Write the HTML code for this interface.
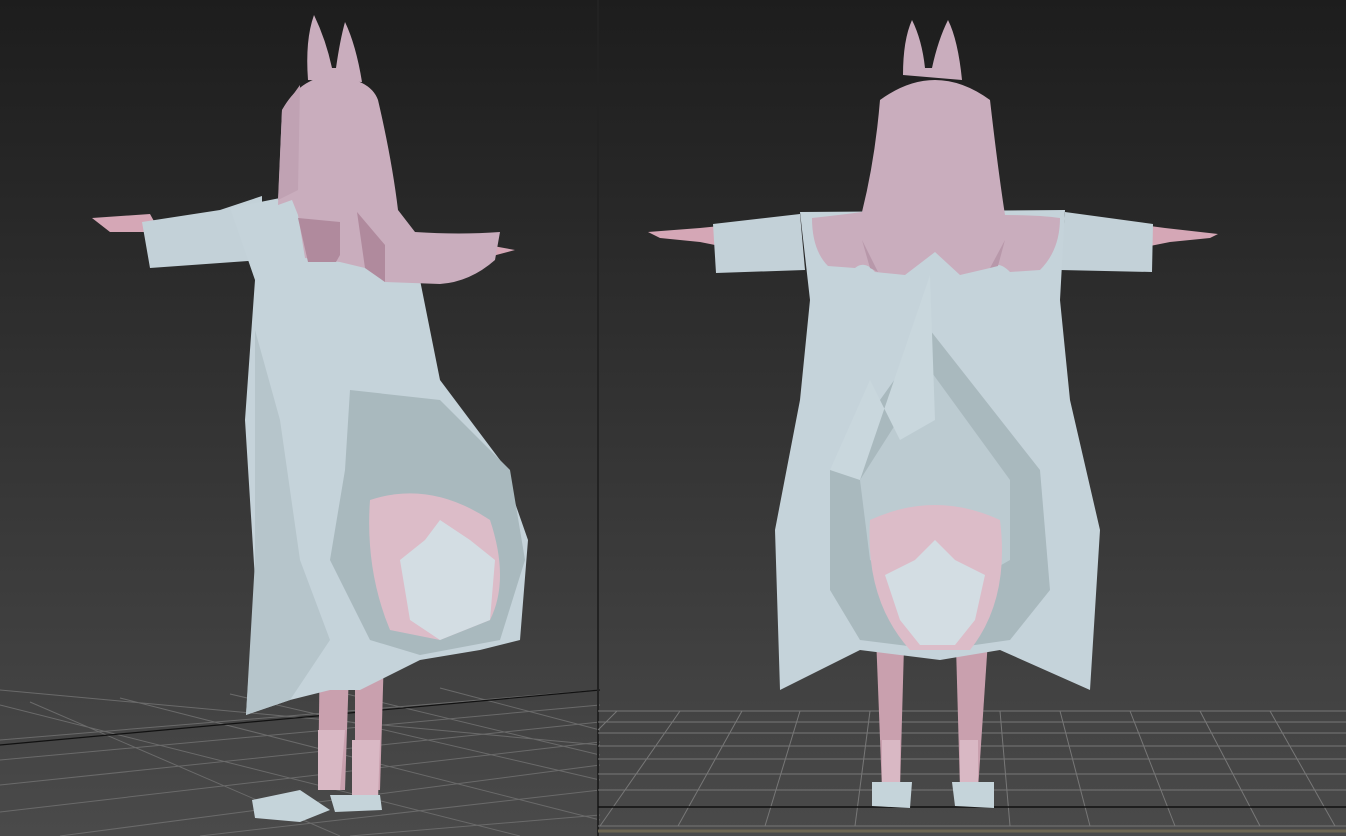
<!DOCTYPE html>
<html><head><style>
html,body{margin:0;padding:0;width:1346px;height:836px;overflow:hidden;background:#2a2a2a}
svg{display:block}
</style></head><body>
<svg width="1346" height="836" viewBox="0 0 1346 836">
<defs>
<linearGradient id="bg" x1="0" y1="0" x2="0" y2="1">
<stop offset="0" stop-color="#1d1d1d"/><stop offset="0.5" stop-color="#333"/><stop offset="1" stop-color="#4a4a4a"/>
</linearGradient>
</defs>
<rect width="1346" height="836" fill="url(#bg)"/>
<!-- left grid -->
<g stroke="#6a6a6a" stroke-width="1" fill="none">
<path d="M0 740 L600 690 M0 760 L600 705 M0 785 L600 722 M0 812 L600 742 M60 836 L600 765 M200 836 L600 790 M350 836 L600 815"/>
<path d="M0 690 L600 745 M0 705 L520 836 M30 702 L340 836 M120 698 L600 820 M230 694 L600 780 M330 690 L600 755 M440 688 L600 730"/>
</g>
<path d="M0 745 L600 690" stroke="#111" stroke-width="1.2"/>
<line x1="598" y1="0" x2="598" y2="836" stroke="#222" stroke-width="2"/>
<!-- right grid -->
<g stroke="#777" stroke-width="1" fill="none">
<path d="M598 711 H1346 M598 722 H1346 M598 733 H1346 M598 746 H1346 M598 759 H1346 M598 774 H1346 M598 790 H1346 M598 826 H1346"/>
<path d="M617 711 L598 730 M680 711 L600 826 M742 711 L678 826 M800 711 L765 826 M870 711 L855 826 M1000 711 L1010 826 M1060 711 L1090 826 M1130 711 L1175 826 M1200 711 L1260 826 M1270 711 L1335 826"/>
</g>
<path d="M598 807 H1346" stroke="#111" stroke-width="1.5"/>
<path d="M598 831 H1346" stroke="#6c6550" stroke-width="3"/>

<!-- RIGHT CHARACTER -->
<g>
<path d="M875 610 L905 610 L900 790 L882 790 Z" fill="#c9a0ae"/>
<path d="M955 610 L990 610 L978 790 L960 790 Z" fill="#c9a0ae"/>
<path d="M882 740 L900 740 L900 790 L882 790Z M960 740 L978 740 L978 790 L960 790Z" fill="#d9b8c4"/>
<path d="M872 782 L912 782 L910 808 L872 806 Z M952 782 L994 782 L994 808 L955 806Z" fill="#c5d4da"/>
<path d="M648 232 L700 228 L720 226 L720 246 L700 242 L660 238 Z" fill="#d5a7b6"/>
<path d="M1218 234 L1165 228 L1150 226 L1150 246 L1170 242 L1210 238Z" fill="#d5a7b6"/>
<path d="M713 224 L800 214 L805 270 L716 273 Z" fill="#c3d1d8"/>
<path d="M1153 224 L1065 212 L1060 270 L1152 272 Z" fill="#c3d1d8"/>
<path d="M800 212 L1065 210 L1060 300 L1070 400 L1100 530 L1090 690 L1000 650 L940 660 L860 650 L780 690 L775 530 L800 400 L810 300 Z" fill="#c5d3da"/>
<path d="M830 470 L930 330 L1040 470 L1050 590 L1010 640 L940 650 L860 640 L830 590 Z" fill="#a9b9be"/>
<path d="M860 480 L930 370 L1010 480 L1010 560 L940 600 L870 560Z" fill="#bccbd1"/>
<path d="M930 275 L935 420 L900 440 L870 380 L830 470 L860 480 Z" fill="#c9d7dd"/>
<path d="M870 520 Q935 490 1000 520 Q1010 600 970 650 L910 650 Q865 600 870 520Z" fill="#dcbcc8"/>
<path d="M885 575 L915 560 L935 540 L955 560 L985 575 L975 620 L955 645 L920 645 L900 620Z" fill="#d3dde3"/>
<!-- hair -->
<path d="M880 100 Q935 60 990 100 Q998 170 1005 215 Q1040 215 1060 218 Q1060 250 1040 270 L1010 272 Q998 260 990 268 L960 275 L935 252 L905 275 L875 272 Q865 260 855 268 L828 266 Q812 250 812 218 Q840 215 862 212 Q875 160 880 100Z" fill="#c9adbd"/>
<path d="M862 240 L870 268 L878 272 Z M1005 240 L998 266 L990 268Z" fill="#b898aa"/>
<!-- ears -->
<path d="M903 75 Q903 40 912 20 Q922 40 925 68 L932 68 Q938 40 948 20 Q958 40 962 80Z" fill="#c9adbd"/>
</g>

<!-- LEFT CHARACTER -->
<g>
<path d="M320 640 L350 640 L345 790 L318 790Z" fill="#c9a0ae"/>
<path d="M355 620 L385 620 L380 790 L355 790Z" fill="#c9a0ae"/>
<path d="M318 730 L345 730 L340 790 L318 790Z M352 740 L380 740 L378 800 L352 800Z" fill="#d9b8c4"/>
<path d="M252 800 L300 790 L330 810 L300 822 L255 818Z M330 795 L380 795 L382 810 L335 812Z" fill="#c5d4da"/>
<path d="M92 218 L150 214 L160 232 L110 232 Z" fill="#d5a7b6"/>
<path d="M460 240 L515 250 L470 262 Z" fill="#d5a7b6"/>
<path d="M142 222 L220 210 L262 196 L262 260 L150 268Z" fill="#c3d1d8"/>
<path d="M230 208 L290 196 L370 210 L420 280 L440 380 L500 460 L528 540 L520 640 L480 650 L420 660 L360 690 L330 690 L290 700 L246 715 L255 580 L245 420 L255 280Z" fill="#c5d3da"/>
<path d="M350 390 L440 400 L510 470 L525 560 L500 640 L420 655 L370 640 L330 560 L345 470Z" fill="#a9b9be"/>
<path d="M255 330 L280 420 L300 560 L330 640 L290 700 L246 715 L255 560Z" fill="#b6c5cb"/>
<path d="M370 500 Q430 480 490 520 Q510 580 490 620 L440 640 L390 630 Q365 570 370 500Z" fill="#dcbcc8"/>
<path d="M400 560 L425 540 L440 520 L470 540 L495 560 L490 620 L440 640 L410 620Z" fill="#d3dde3"/>
<!-- hair -->
<path d="M282 110 Q300 78 330 76 Q370 78 378 100 Q392 160 398 210 L415 232 Q460 235 500 232 L495 260 Q470 282 440 284 L385 282 L365 268 L340 262 L305 258 L298 215 L292 200 L278 205 Z" fill="#c9adbd"/>
<path d="M298 218 L308 262 L336 262 L340 255 L340 222 Z" fill="#b08a9d"/>
<path d="M357 212 L365 268 L385 282 L385 245 Z" fill="#b08a9d"/>
<path d="M282 110 L300 85 L298 190 L278 200 Z" fill="#c0a2b3"/>
<!-- ears -->
<path d="M308 80 Q305 40 314 15 Q326 40 332 68 L336 68 Q340 40 345 22 Q356 45 362 82Z" fill="#c9adbd"/>
</g>
</svg>
</body></html>
